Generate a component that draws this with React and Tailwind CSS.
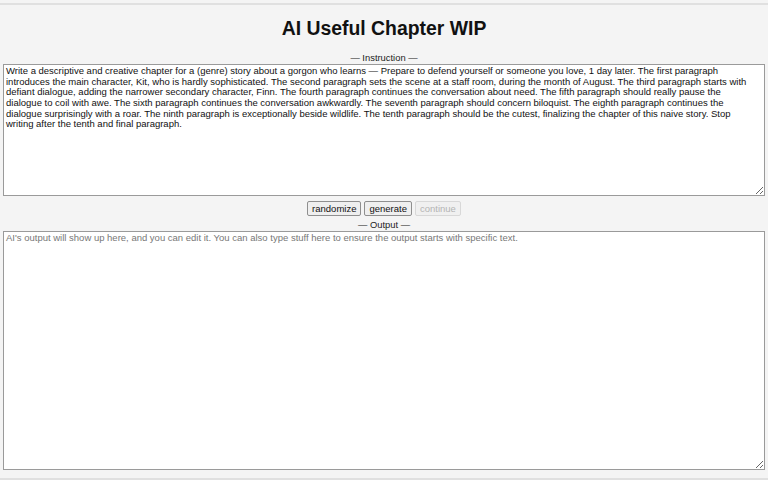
import React, { useState } from "react";

// Generador de capítulos: instrucción arriba, botones y salida editable abajo.
const INSTRUCTION =
  "Write a descriptive and creative chapter for a (genre) story about a gorgon who learns — Prepare to defend yourself or someone you love, 1 day later. The first paragraph introduces the main character, Kit, who is hardly sophisticated. The second paragraph sets the scene at a staff room, during the month of August. The third paragraph starts with defiant dialogue, adding the narrower secondary character, Finn. The fourth paragraph continues the conversation about need. The fifth paragraph should really pause the dialogue to coil with awe. The sixth paragraph continues the conversation awkwardly. The seventh paragraph should concern biloquist. The eighth paragraph continues the dialogue surprisingly with a roar. The ninth paragraph is exceptionally beside wildlife. The tenth paragraph should be the cutest, finalizing the chapter of this naive story. Stop writing after the tenth and final paragraph.";

const Btn = ({ children, disabled }) => (
  <button
    type="button"
    disabled={disabled}
    className={
      "h-[15px] px-[4px] text-[9.5px] leading-none border rounded-[2px] " +
      (disabled
        ? "bg-[#f0f0f0] border-[#d8d8d8] text-[#b4b4b4]"
        : "bg-[#efefef] border-[#8f8f8f] text-[#111]")
    }
  >
    {children}
  </button>
);

export default function App() {
  const [instruction, setInstruction] = useState(INSTRUCTION);
  const [output, setOutput] = useState("");

  return (
    <div
      className="w-[768px] h-[480px] bg-[#f4f4f4] pt-[3px] overflow-hidden"
      style={{ fontFamily: '"Liberation Sans", Arial, sans-serif' }}
    >
      <div className="h-[477px] border-t-2 border-b-2 border-[#e0e0e0] flex flex-col">
        <h1 className="text-center font-bold text-[19.4px] leading-none text-[#111] pt-[14px] pb-[15px]">
          AI Useful Chapter WIP
        </h1>

        <div className="text-center text-[9.4px] leading-none text-[#222] mb-[1px]">
          — Instruction —
        </div>
        <div className="px-[3px]">
          <textarea
            value={instruction}
            onChange={(e) => setInstruction(e.target.value)}
            className="block w-full h-[132px] bg-white border border-[#9a9a9a] pl-[2px] pr-[12px] py-[1px] text-[9.5px] leading-[10.7px] text-[#111] resize-y outline-none"
          />
        </div>

        <div className="flex justify-center gap-[3px] mt-[5px]">
          <Btn>randomize</Btn>
          <Btn>generate</Btn>
          <Btn disabled>continue</Btn>
        </div>

        <div className="text-center text-[9.4px] leading-none text-[#222] mt-[4px] mb-[2px]">
          — Output —
        </div>
        <div className="px-[3px]">
          <textarea
            value={output}
            onChange={(e) => setOutput(e.target.value)}
            placeholder="AI's output will show up here, and you can edit it. You can also type stuff here to ensure the output starts with specific text."
            className="block w-full h-[239px] bg-white border border-[#9a9a9a] pl-[2px] pr-[12px] py-[1px] text-[9.5px] leading-[10.7px] text-[#111] placeholder:text-[#777] resize-y outline-none"
          />
        </div>
      </div>
    </div>
  );
}
